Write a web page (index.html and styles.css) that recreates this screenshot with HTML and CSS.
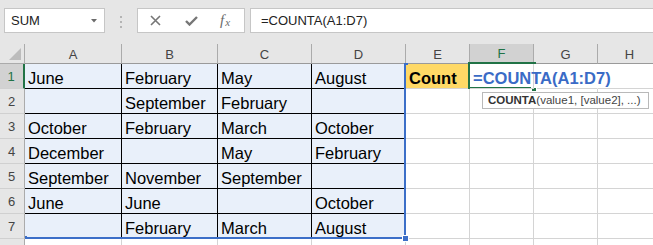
FILE: index.html
```html
<!DOCTYPE html>
<html lang="en">
<head>
    <meta charset="UTF-8">
    <title>COUNTA</title>
    <link rel="stylesheet" href="styles.css">
</head>
<body>
    <div class="toolbar">
        <div class="namebox">
            <span>SUM</span>
            <svg class="arrow" width="6" height="4" viewBox="0 0 6 4"><path d="M0 0h6L3 3.5z" fill="#6b6b6b"/></svg>
        </div>
        <div class="grip"><i></i><i></i><i></i></div>
        <div class="fbuttons">
            <svg class="icon-x" width="11" height="11" viewBox="0 0 11 11"><path d="M1 1l9 9M10 1l-9 9" stroke="#767676" stroke-width="1.6" fill="none"/></svg>
            <svg class="icon-check" width="13" height="10" viewBox="0 0 13 10"><path d="M1 5l3.5 3.5L12 1" stroke="#767676" stroke-width="2.4" fill="none"/></svg>
            <span class="fx">f<sub>x</sub></span>
        </div>
        <div class="formula">=COUNTA(A1:D7)</div>
    </div>

    <div class="sheet">
        <div class="grid">
            <!-- column headers -->
            <div class="hd corner"><svg width="12" height="12" viewBox="0 0 12 12"><path d="M12 0v12H0z" fill="#bcbcbc"/></svg></div>
            <div class="hd col">A</div>
            <div class="hd col">B</div>
            <div class="hd col">C</div>
            <div class="hd col">D</div>
            <div class="hd col">E</div>
            <div class="hd col sel">F</div>
            <div class="hd col">G</div>
            <div class="hd col">H</div>

            <!-- row 1 -->
            <div class="hd row sel">1</div>
            <div class="c r">June</div>
            <div class="c r">February</div>
            <div class="c r">May</div>
            <div class="c r">August</div>
            <div class="c label">Count</div>
            <div class="c edit">=COUNTA(A1:D7)</div>
            <div class="c spill"></div>
            <div class="c"></div>

            <!-- row 2 -->
            <div class="hd row">2</div>
            <div class="c r"></div>
            <div class="c r">September</div>
            <div class="c r">February</div>
            <div class="c r"></div>
            <div class="c"></div><div class="c"></div><div class="c"></div><div class="c"></div>

            <!-- row 3 -->
            <div class="hd row">3</div>
            <div class="c r">October</div>
            <div class="c r">February</div>
            <div class="c r">March</div>
            <div class="c r">October</div>
            <div class="c"></div><div class="c"></div><div class="c"></div><div class="c"></div>

            <!-- row 4 -->
            <div class="hd row">4</div>
            <div class="c r">December</div>
            <div class="c r"></div>
            <div class="c r">May</div>
            <div class="c r">February</div>
            <div class="c"></div><div class="c"></div><div class="c"></div><div class="c"></div>

            <!-- row 5 -->
            <div class="hd row">5</div>
            <div class="c r">September</div>
            <div class="c r">November</div>
            <div class="c r">September</div>
            <div class="c r"></div>
            <div class="c"></div><div class="c"></div><div class="c"></div><div class="c"></div>

            <!-- row 6 -->
            <div class="hd row">6</div>
            <div class="c r">June</div>
            <div class="c r">June</div>
            <div class="c r"></div>
            <div class="c r">October</div>
            <div class="c"></div><div class="c"></div><div class="c"></div><div class="c"></div>

            <!-- row 7 -->
            <div class="hd row">7</div>
            <div class="c r"></div>
            <div class="c r">February</div>
            <div class="c r">March</div>
            <div class="c r">August</div>
            <div class="c"></div><div class="c"></div><div class="c"></div><div class="c"></div>

            <!-- row 8, only its top edge is in view -->
            <div class="hd row"></div>
            <div class="c"></div><div class="c"></div><div class="c"></div><div class="c"></div>
            <div class="c"></div><div class="c"></div><div class="c"></div><div class="c"></div>
        </div>

        <!-- reference range and active cell drawn over the grid -->
        <div class="range"></div>
        <div class="knob knob-tr"></div>
        <div class="knob knob-br"></div>
        <div class="knob knob-bl"></div>
        <div class="active"></div>
        <div class="active-knob"></div>
        <div class="tip"><b>COUNTA</b>(value1, [value2], ...)</div>
    </div>
</body>
</html>
```

FILE: styles.css
```css
body {
    margin: 0;
    width: 653px;
    height: 245px;
    overflow: hidden;
    background: #fff;
    font-family: "Liberation Sans", Arial, sans-serif;
}

/* formula bar */
.toolbar {
    height: 44px;
    box-sizing: border-box;
    background: #e6e6e6;
    display: flex;
    align-items: flex-start;
    padding: 8px 0 0 4px;
}
.namebox {
    width: 101px;
    height: 25px;
    box-sizing: border-box;
    background: #fff;
    border: 1px solid #c6c6c6;
    display: flex;
    align-items: center;
    justify-content: space-between;
    padding: 0 7px 0 6px;
    font-size: 13px;
    color: #222;
}
.grip {
    margin: 8px 0 0 15px;
    width: 2px;
    display: flex;
    flex-direction: column;
    gap: 3px;
}
.grip i {
    width: 2px;
    height: 2px;
    background: #b4b4b4;
}
.fbuttons {
    margin-left: 15px;
    width: 108px;
    height: 25px;
    box-sizing: border-box;
    background: #fff;
    border: 1px solid #c6c6c6;
    display: flex;
    align-items: center;
    padding-left: 12px;
}
.icon-check {
    margin-left: 24px;
}
.fx {
    margin-left: 22px;
    font-family: "Liberation Serif", serif;
    font-style: italic;
    font-size: 15px;
    color: #6b6b6b;
    line-height: 1;
}
.fx sub {
    font-size: 11px;
    vertical-align: -1px;
    margin-left: 1px;
}
.formula {
    margin-left: 5px;
    flex: 1;
    height: 25px;
    box-sizing: border-box;
    background: #fff;
    border: 1px solid #c6c6c6;
    border-right: none;
    padding-left: 10px;
    font-size: 13px;
    line-height: 23px;
    color: #222;
}

/* sheet */
.sheet {
    position: relative;
}
.grid {
    display: grid;
    grid-template-columns: 25px 97px 96px 94px 94px 64px 64px 64px 64px;
    grid-template-rows: 20px repeat(8, 25px);
}
.hd {
    background: #e6e6e6;
    color: #444;
    font-size: 13px;
    box-sizing: border-box;
    display: flex;
    align-items: center;
    justify-content: center;
}
.corner {
    border-right: 1px solid #ababab;
    border-bottom: 1px solid #ababab;
    align-items: flex-end;
    justify-content: flex-end;
    padding: 0 3px 3px 0;
}
.col {
    border-right: 1px solid #ababab;
    border-bottom: 1px solid #9a9a9a;
    padding-top: 1px;
}
.row {
    border-right: 1px solid #ababab;
    border-bottom: 1px solid #d0d0d0;
    align-items: flex-end;
    padding: 0 1px 4px 0;
}
.col.sel {
    background: #d2d2d2;
    color: #217346;
    border-bottom: 2px solid #217346;
}
.row.sel {
    background: #d2d2d2;
    color: #217346;
    border-right: 2px solid #217346;
}

.c {
    box-sizing: border-box;
    border-right: 1px solid #d4d4d4;
    border-bottom: 1px solid #d4d4d4;
    font-size: 16.5px;
    line-height: 18px;
    color: #000;
    display: flex;
    align-items: flex-end;
    padding: 0 3px 1px 3px;
    white-space: nowrap;
}
.c.r {
    background: #e9f0fa;
    border-color: #000;
}
.c.label {
    background: #ffd966;
    font-weight: bold;
}
.c.edit {
    position: relative;
    z-index: 2;
    color: #3a6bc6;
    font-weight: bold;
    overflow: visible;
    padding-left: 3px;
}
.c.spill {
    border-right-color: transparent;
}

/* overlays */
.range {
    position: absolute;
    left: 25px;
    top: 19px;
    width: 381px;
    height: 176px;
    box-sizing: border-box;
    border-right: 2px solid #3c6fc8;
    border-bottom: 2px solid #3c6fc8;
}
.knob {
    position: absolute;
    background: #3c6fc8;
}
.knob-tr {
    left: 404px;
    top: 19px;
    width: 4px;
    height: 2px;
}
.knob-br {
    left: 402px;
    top: 191px;
    width: 5px;
    height: 5px;
    border: 1px solid #fff;
}
.knob-bl {
    left: 25px;
    top: 192px;
    width: 2px;
    height: 3px;
}
.active {
    position: absolute;
    left: 468px;
    top: 18px;
    width: 68px;
    height: 27px;
    box-sizing: border-box;
    border: 2px solid #217346;
    border-right: none;
}
.active-knob {
    position: absolute;
    left: 531px;
    top: 43px;
    width: 4px;
    height: 3px;
    background: #217346;
    border: 1px solid #fff;
}
.tip {
    position: absolute;
    left: 482px;
    top: 48px;
    width: 167px;
    height: 17px;
    box-sizing: border-box;
    background: #fff;
    border: 1px solid #b9b9b9;
    padding-left: 5px;
    font-size: 11.5px;
    line-height: 15px;
    color: #444;
    white-space: nowrap;
}
.tip b {
    color: #333;
}
```
